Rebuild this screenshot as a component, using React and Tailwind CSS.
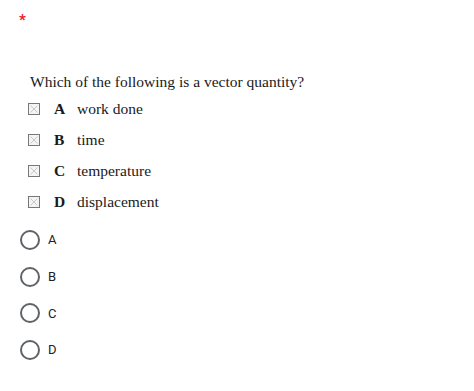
import React from "react";

function Box() {
  return (
    <svg width="12" height="12" viewBox="0 0 12 12" className="shrink-0">
      <rect x="0.5" y="0.5" width="11" height="11" fill="#f4f4f4" stroke="#777" strokeWidth="1" />
      <path d="M2.5 2.5 L9.5 9.5 M9.5 2.5 L2.5 9.5" stroke="#c8c8c8" strokeWidth="1" />
    </svg>
  );
}

export default function App() {
  const opts = [
    ["A", "work done"],
    ["B", "time"],
    ["C", "temperature"],
    ["D", "displacement"],
  ];
  return (
    <div className="w-[474px] h-[391px] bg-white relative">
      <div className="pt-[12px] pl-[19px] text-[#e8202a] text-[15px] leading-[16px] font-bold" style={{ fontFamily: "Roboto, Arial, sans-serif" }}>*</div>
      <div className="pl-[30px] pt-[44px]" style={{ fontFamily: '"Liberation Serif", "Times New Roman", serif' }}>
        <div className="text-[15.5px] leading-[20px] text-[#1a1a1a]">Which of the following is a vector quantity?</div>
        <div className="flex flex-col gap-[11px] mt-[7px]">
          {opts.map(([l, t]) => (
            <div key={l} className="flex items-center h-[20px] -ml-[2px] text-[15.5px] text-[#1a1a1a]">
              <Box />
              <span className="font-bold w-[23px] ml-[14px]">{l}</span>
              <span>{t}</span>
            </div>
          ))}
        </div>
      </div>
      <div className="flex flex-col gap-[16.7px] mt-[18px] pl-[20px]" style={{ fontFamily: "Roboto, Arial, sans-serif" }}>
        {opts.map(([l]) => (
          <div key={l} className="flex items-center h-[20px]">
            <div className="w-[20px] h-[20px] rounded-full border-2 border-[#5f6368]" />
            <span className="ml-[8px] text-[13px] text-[#202124]">{l}</span>
          </div>
        ))}
      </div>
    </div>
  );
}
